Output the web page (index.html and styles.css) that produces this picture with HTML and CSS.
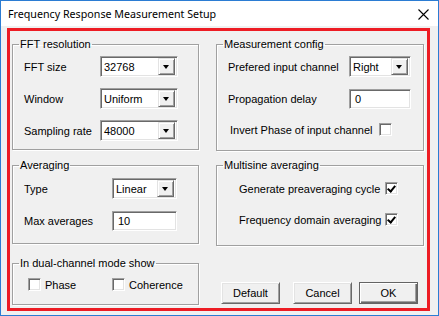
FILE: index.html
```html
<!DOCTYPE html>
<html>
<head>
<meta charset="utf-8">
<link rel="stylesheet" href="styles.css">
</head>
<body>
<div class="window">
  <div class="titlebar">
    <span class="title">Frequency Response Measurement Setup</span>
    <svg class="close" width="11" height="11" viewBox="0 0 11 11"><path d="M0.5 0.5 L10.5 10.5 M10.5 0.5 L0.5 10.5" stroke="#000" stroke-width="1.1" fill="none"/></svg>
  </div>
  <div class="client">
    <div class="frame">
      <div class="col">
        <fieldset class="grp g-fft">
          <legend>FFT resolution</legend>
          <div class="gbody">
            <div class="row"><span class="lbl w76">FFT size</span><div class="combo w78"><span class="val">32768</span><span class="arrow"></span></div></div>
            <div class="row"><span class="lbl w76">Window</span><div class="combo w78"><span class="val">Uniform</span><span class="arrow"></span></div></div>
            <div class="row"><span class="lbl w76">Sampling rate</span><div class="combo w78"><span class="val">48000</span><span class="arrow"></span></div></div>
          </div>
        </fieldset>
        <fieldset class="grp g-avg">
          <legend>Averaging</legend>
          <div class="gbody">
            <div class="row"><span class="lbl w88">Type</span><div class="combo w65"><span class="val">Linear</span><span class="arrow"></span></div></div>
            <div class="row"><span class="lbl w88">Max averages</span><div class="edit w65">10</div></div>
          </div>
        </fieldset>
        <fieldset class="grp g-dual">
          <legend>In dual-channel mode show</legend>
          <div class="gbody checks">
            <label class="chk-item"><span class="cb"></span><span>Phase</span></label>
            <label class="chk-item"><span class="cb"></span><span>Coherence</span></label>
          </div>
        </fieldset>
      </div>
      <div class="col">
        <fieldset class="grp g-meas">
          <legend>Measurement config</legend>
          <div class="gbody">
            <div class="row"><span class="lbl w121">Prefered input channel</span><div class="combo w62"><span class="val">Right</span><span class="arrow"></span></div></div>
            <div class="row"><span class="lbl w121">Propagation delay</span><div class="edit w62">0</div></div>
            <div class="row row-cb inv"><span class="lbl w149">Invert Phase of input channel</span><span class="cb"></span></div>
          </div>
        </fieldset>
        <fieldset class="grp g-multi">
          <legend>Multisine averaging</legend>
          <div class="gbody">
            <div class="row row-cb"><span class="lbl w146">Generate preaveraging cycle</span><span class="cb checked"></span></div>
            <div class="row row-cb"><span class="lbl w146">Frequency domain averaging</span><span class="cb checked"></span></div>
          </div>
        </fieldset>
        <div class="buttons">
          <button class="btn">Default</button>
          <button class="btn b-cancel">Cancel</button>
          <button class="btn b-ok">OK</button>
        </div>
      </div>
    </div>
  </div>
</div>
</body>
</html>
```
FILE: styles.css
```css
html, body {
  margin: 0;
  padding: 0;
  background: #f0f0f0;
}
.window {
  width: 439px;
  height: 316px;
  box-sizing: border-box;
  border: 1px solid #2b7cd3;
  display: flex;
  flex-direction: column;
  background: #f0f0f0;
  font-family: "Liberation Sans", Arial, sans-serif;
  font-size: 11px;
  color: #000;
}
.titlebar {
  flex: none;
  height: 25px;
  background: #fff;
  display: flex;
  align-items: center;
  justify-content: space-between;
  padding: 0 9px 0 7px;
}
.title {
  font-family: "Noto Sans", "Open Sans", sans-serif;
  font-size: 10.7px;
  color: #000;
}
.close {
  display: block;
  margin-top: 2px;
}
.client {
  flex: 1;
  padding: 2px 0 0 6px;
}
.frame {
  box-sizing: border-box;
  width: 423px;
  height: 283px;
  border: 3px solid #ed1c24;
  display: grid;
  grid-template-columns: 187px 208px;
  column-gap: 17px;
  padding: 7px 0 0 2px;
  align-items: start;
}
.col {
  display: flex;
  flex-direction: column;
}
.grp {
  margin: 0;
  padding: 0;
  box-sizing: border-box;
  border: 1px solid #a0a0a0;
  box-shadow: inset 1px 1px 0 #fff, 1px 1px 0 #fff;
  min-width: 0;
}
.grp legend {
  padding: 0 1px;
  margin-left: 6px;
  line-height: 13px;
  font-size: 11px;
}
.gbody {
  display: flex;
  flex-direction: column;
}
.g-fft {
  height: 112px;
}
.g-fft .gbody {
  padding: 5px 0 0 11px;
  row-gap: 11px;
}
.g-avg {
  height: 85px;
  margin-top: 9px;
}
.g-avg .gbody {
  padding: 6px 0 0 11px;
  row-gap: 11px;
}
.g-dual {
  height: 48px;
  margin-top: 13px;
}
.g-dual .gbody {
  padding: 8px 0 0 15px;
}
.g-meas {
  height: 113px;
}
.g-meas .gbody {
  padding: 5px 0 0 11px;
  row-gap: 11px;
}
.g-multi {
  height: 87px;
  margin-top: 8px;
}
.g-multi .gbody {
  padding: 10px 0 0 22px;
  row-gap: 18px;
}
.row {
  display: flex;
  align-items: center;
  height: 21px;
}
.row-cb {
  height: 13px;
}
.inv {
  margin-top: 3px;
  padding-left: 2px;
}
.lbl {
  flex: none;
  white-space: nowrap;
}
.w76 { width: 76px; }
.w88 { width: 88px; }
.w121 { width: 121px; }
.w149 { width: 149px; }
.w146 { width: 146px; }
.w78 { width: 78px; }
.w65 { width: 65px; }
.w62 { width: 62px; }

.combo, .edit {
  box-sizing: border-box;
  height: 21px;
  background: #fff;
  border: 1px solid;
  border-color: #a0a0a0 #fff #fff #a0a0a0;
  box-shadow: inset 1px 1px 0 #696969, inset -1px -1px 0 #e3e3e3;
  display: flex;
  align-items: center;
  padding: 2px 2px 2px 3px;
  flex: none;
}
.edit {
  height: 20px;
  padding-left: 5px;
}
.val {
  flex: 1;
  white-space: nowrap;
}
.arrow {
  box-sizing: border-box;
  width: 17px;
  height: 17px;
  flex: none;
  background: #f0f0f0;
  border: 1px solid;
  border-color: #e3e3e3 #696969 #696969 #e3e3e3;
  box-shadow: inset 1px 1px 0 #fff, inset -1px -1px 0 #a0a0a0;
  position: relative;
}
.arrow::after {
  content: "";
  position: absolute;
  left: 4px;
  top: 6px;
  border-left: 3.5px solid transparent;
  border-right: 3.5px solid transparent;
  border-top: 4px solid #000;
}
.cb {
  box-sizing: border-box;
  width: 13px;
  height: 13px;
  flex: none;
  background: #fff;
  border: 1px solid;
  border-color: #a0a0a0 #fff #fff #a0a0a0;
  box-shadow: inset 1px 1px 0 #696969, inset -1px -1px 0 #e3e3e3;
  position: relative;
}
.cb.checked::after {
  content: "";
  position: absolute;
  left: 3px;
  top: 1px;
  width: 3px;
  height: 6px;
  border-right: 2px solid #000;
  border-bottom: 2px solid #000;
  transform: rotate(40deg);
}
.checks {
  flex-direction: row;
  align-items: center;
  height: 13px;
  box-sizing: content-box;
}
.chk-item {
  display: flex;
  align-items: center;
  gap: 4px;
  width: 84px;
}
.buttons {
  display: flex;
  margin-top: 36px;
  padding-left: 5px;
}
.btn {
  box-sizing: border-box;
  width: 59px;
  height: 22px;
  padding: 0;
  font-family: "Liberation Sans", Arial, sans-serif;
  font-size: 11px;
  color: #000;
  background: #f0f0f0;
  border: 1px solid;
  border-color: #fff #696969 #696969 #fff;
  box-shadow: inset 1px 1px 0 #e3e3e3, inset -1px -1px 0 #a0a0a0;
}
.b-cancel {
  margin-left: 13px;
}
.b-ok {
  margin-left: 7px;
  border: 1px solid #646464;
  box-shadow: inset 1px 1px 0 #fff, inset -1px -1px 0 #696969, inset -2px -2px 0 #a0a0a0;
}
```
